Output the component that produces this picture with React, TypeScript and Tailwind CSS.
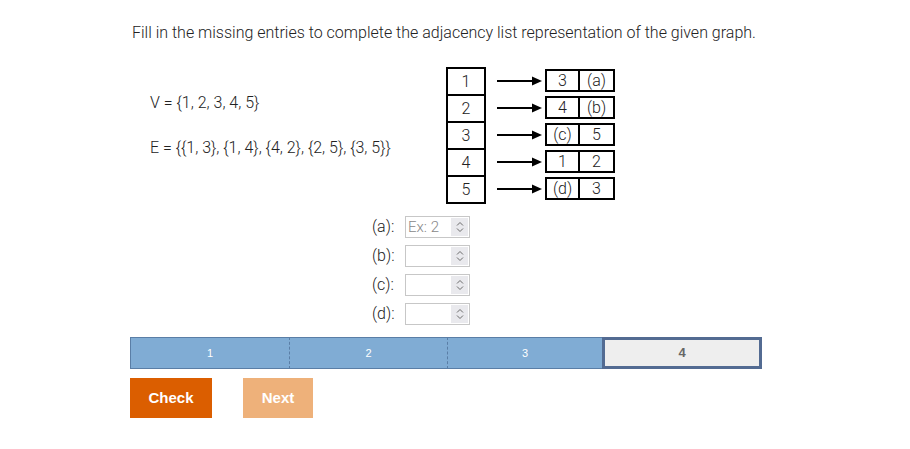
import React from "react";

const Arrow = () => (
  <svg width="59" height="10" viewBox="0 0 59 10" className="block">
    <line x1="11" y1="5" x2="48" y2="5" stroke="#000" strokeWidth="2" />
    <polygon points="46,0.5 56,5 46,9.5" fill="#000" />
  </svg>
);

const Spinner = () => (
  <div className="flex h-full w-[17px] flex-col items-center justify-center bg-[#e9e9ed]">
    <svg width="8" height="12" viewBox="0 0 8 12">
      <polyline points="1,4.5 4,1.5 7,4.5" fill="none" stroke="#6b6b6b" strokeWidth="1" />
      <polyline points="1,7.5 4,10.5 7,7.5" fill="none" stroke="#6b6b6b" strokeWidth="1" />
    </svg>
  </div>
);

export default function App() {
  const rows = ["1", "2", "3", "4", "5"];
  const pairs: [string, string][] = [
    ["3", "(a)"],
    ["4", "(b)"],
    ["(c)", "5"],
    ["1", "2"],
    ["(d)", "3"],
  ];
  const inputs = ["(a):", "(b):", "(c):", "(d):"];
  return (
    <div className="min-h-[449px] w-[910px] bg-white text-[#222]" style={{ fontFamily: "Roboto, 'Liberation Sans', sans-serif" }}>
      <div className="ml-[130px] w-[632px] pt-[23px]">
        <p className="pl-[2px] text-[16px] font-light leading-[20px] text-[#222]">
          Fill in the missing entries to complete the adjacency list representation of the given graph.
        </p>
        <div className="mt-[24px] flex">
          <div className="w-[316px] pl-[20px] text-[16px] font-light text-[#222]">
            <div className="mt-[27px] leading-[18px]">V = {"{"}1, 2, 3, 4, 5{"}"}</div>
            <div className="mt-[27px] leading-[18px]">E = {"{{"}1, 3{"}"}, {"{"}1, 4{"}"}, {"{"}4, 2{"}"}, {"{"}2, 5{"}"}, {"{"}3, 5{"}}"}</div>
          </div>
          <div className="flex">
            <div className="flex w-[40px] flex-col border-2 border-black">
              {rows.map((r, i) => (
                <div
                  key={r}
                  className={`flex items-center justify-center text-[16px] font-light leading-none ${i > 0 ? "h-[27px] border-t-2 border-black" : "h-[25px]"}`}
                >
                  {r}
                </div>
              ))}
            </div>
            <div className="flex flex-col pt-[2px]">
              {rows.map((r, i) => (
                <div key={r} className="flex h-[27px] items-start">
                  <div className="flex h-[23px] items-center">
                    <Arrow />
                  </div>
                  <div className="flex h-[23px] w-[70px] border-2 border-black">
                    <div className="flex w-[33px] items-center justify-center border-r-2 border-black text-[16px] font-light leading-none">
                      {pairs[i][0]}
                    </div>
                    <div className="flex flex-1 items-center justify-center text-[16px] font-light leading-none">
                      {pairs[i][1]}
                    </div>
                  </div>
                </div>
              ))}
            </div>
          </div>
        </div>
        <div className="mt-[12px] ml-[242px] flex flex-col gap-[7px]">
          {inputs.map((l, i) => (
            <div key={l} className="flex h-[22px] items-center">
              <span className="w-[33px] text-[16px] font-light leading-[22px] text-[#222]">{l}</span>
              <div className="flex h-[22px] w-[65px] items-center border border-[#c7c7c7] bg-white pl-[2px]">
                <span className="flex-1 text-[15px] font-light leading-none text-[#888]">{i === 0 ? "Ex: 2" : ""}</span>
                <div className="mr-[1px] h-[18px]">
                  <Spinner />
                </div>
              </div>
            </div>
          ))}
        </div>
        <div className="mt-[12px] grid h-[32px] grid-cols-[159px_158px_155px_160px]" style={{ fontFamily: "'Liberation Sans', Arial, sans-serif" }}>
          <div className="flex items-center justify-center border border-r-0 border-[#5a7ea6] bg-[#80acd4] text-[11px] text-white">1</div>
          <div className="flex items-center justify-center border-y border-l border-dashed border-[#5a7ea6] bg-[#80acd4] text-[11px] text-white" style={{ borderTopStyle: "solid", borderBottomStyle: "solid" }}>2</div>
          <div className="flex items-center justify-center border-y border-l border-dashed border-[#5a7ea6] bg-[#80acd4] text-[11px] text-white" style={{ borderTopStyle: "solid", borderBottomStyle: "solid" }}>3</div>
          <div className="flex items-center justify-center border-[3px] border-[#536b92] bg-[#eeeeee] text-[13px] font-bold text-[#666]">4</div>
        </div>
        <div className="mt-[9px] flex gap-[31px]" style={{ fontFamily: "'Liberation Sans', Arial, sans-serif" }}>
          <button className="h-[40px] w-[82px] bg-[#db5e00] text-[15px] font-bold text-white">Check</button>
          <button className="h-[40px] w-[70px] bg-[#eeb17a] text-[15px] font-bold text-white">Next</button>
        </div>
      </div>
    </div>
  );
}
